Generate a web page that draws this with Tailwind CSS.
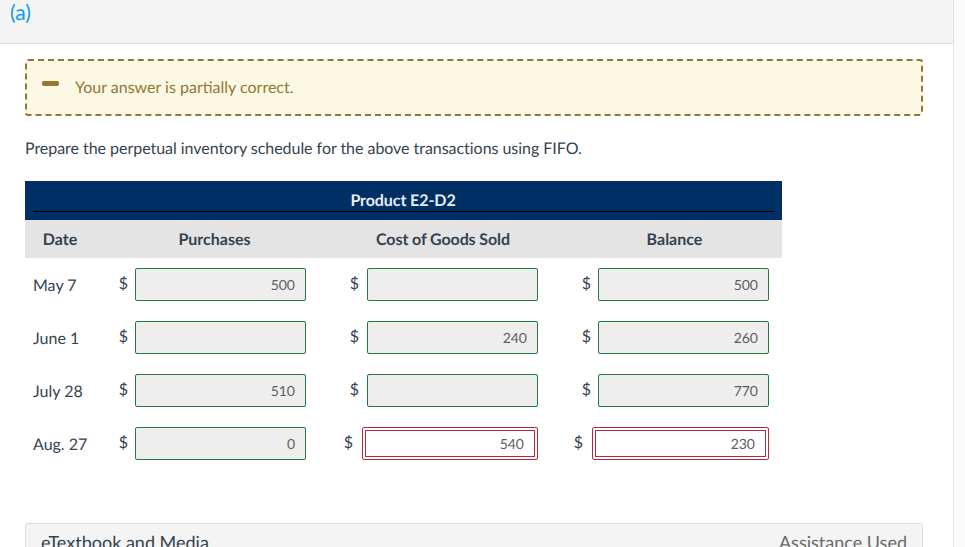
<!DOCTYPE html>
<html>
<head>
<meta charset="utf-8">
<script src="https://cdn.jsdelivr.net/npm/@tailwindcss/browser@4"></script>
</head>
<body class="h-[547px] w-[965px] overflow-hidden bg-[#fafafa] font-['Lato','Noto_Sans',sans-serif] text-[#35434f] [text-rendering:geometricPrecision]">
<div class="h-[547px] w-[954px] overflow-hidden border-r border-[#e3e3e3] bg-white">
  <div class="h-[44px] border-b border-[#dedede] bg-[#f4f4f4] pl-[10px] text-[21px] leading-[26px] text-[#0a9bf0]">(a)</div>
  <div class="mx-[25px] mt-[15px] flex h-[57px] w-[898px] items-center rounded-[3px] border-2 border-dashed border-[#957635] bg-[#fbf8e3] text-[16px] text-[#957635]">
    <div class="ml-[15px] mb-[9px] h-[5px] w-[17px] rounded-[2px] bg-[#957635]"></div>
    <div class="ml-[16px] mt-[1px]">Your answer is partially correct.</div>
  </div>
  <p class="ml-[25px] mt-[21px] text-[16px] leading-[24px] tracking-[-0.04px] text-[#35434f]">Prepare the perpetual inventory schedule for the above transactions using FIFO.</p>
  <div class="ml-[25px] mt-[20px] w-[757px]">
    <div class="h-[39px] bg-[#002f65] px-[8px] pt-[10px]">
      <div class="h-[21px] border-b border-black text-center text-[16px] font-bold leading-[19px] tracking-[-0.08px] text-[#e8edf3]"><span class="ml-[-1px]">Product E2-D2</span></div>
    </div>
    <div class="grid h-[38px] grid-cols-[70px_239px_218px_230px] items-center bg-[#e4e4e4] pt-[2px] text-center text-[16px] font-bold text-[#35434f]">
      <div>Date</div>
      <div>Purchases</div>
      <div class="tracking-[-0.1px]">Cost of Goods Sold</div>
      <div class="pl-[15px]">Balance</div>
    </div>

    <div class="mt-[10px] flex flex-col gap-[20px] pl-[8px] text-[16px]">
      <div class="grid h-[33px] grid-cols-[77px_196px_232px_231px] items-center">
        <div class="mt-[2px]">May 7</div>
        <div class="flex items-center justify-end gap-[7px]"><span class="mt-[-2px]">$</span><div class="flex h-[33px] w-[171px] items-center justify-end rounded-[2px] border border-[#1f7a3d] bg-[#eeeeee] pr-[10px] text-[14px] text-[#5e5e5e]">500</div></div>
        <div class="flex items-center justify-end gap-[8px]"><span class="mt-[-2px]">$</span><div class="flex h-[33px] w-[171px] items-center justify-end rounded-[2px] border border-[#1f7a3d] bg-[#eeeeee] pr-[10px] text-[14px] text-[#5e5e5e]"></div></div>
        <div class="flex items-center justify-end gap-[7px]"><span class="mt-[-2px]">$</span><div class="flex h-[33px] w-[171px] items-center justify-end rounded-[2px] border border-[#1f7a3d] bg-[#eeeeee] pr-[10px] text-[14px] text-[#5e5e5e]">500</div></div>
      </div>
      <div class="grid h-[33px] grid-cols-[77px_196px_232px_231px] items-center">
        <div class="mt-[2px]">June 1</div>
        <div class="flex items-center justify-end gap-[7px]"><span class="mt-[-2px]">$</span><div class="flex h-[33px] w-[171px] items-center justify-end rounded-[2px] border border-[#1f7a3d] bg-[#eeeeee] pr-[10px] text-[14px] text-[#5e5e5e]"></div></div>
        <div class="flex items-center justify-end gap-[8px]"><span class="mt-[-2px]">$</span><div class="flex h-[33px] w-[171px] items-center justify-end rounded-[2px] border border-[#1f7a3d] bg-[#eeeeee] pr-[10px] text-[14px] text-[#5e5e5e]">240</div></div>
        <div class="flex items-center justify-end gap-[7px]"><span class="mt-[-2px]">$</span><div class="flex h-[33px] w-[171px] items-center justify-end rounded-[2px] border border-[#1f7a3d] bg-[#eeeeee] pr-[10px] text-[14px] text-[#5e5e5e]">260</div></div>
      </div>
      <div class="grid h-[33px] grid-cols-[77px_196px_232px_231px] items-center">
        <div class="mt-[2px]">July 28</div>
        <div class="flex items-center justify-end gap-[7px]"><span class="mt-[-2px]">$</span><div class="flex h-[33px] w-[171px] items-center justify-end rounded-[2px] border border-[#1f7a3d] bg-[#eeeeee] pr-[10px] text-[14px] text-[#5e5e5e]">510</div></div>
        <div class="flex items-center justify-end gap-[8px]"><span class="mt-[-2px]">$</span><div class="flex h-[33px] w-[171px] items-center justify-end rounded-[2px] border border-[#1f7a3d] bg-[#eeeeee] pr-[10px] text-[14px] text-[#5e5e5e]"></div></div>
        <div class="flex items-center justify-end gap-[7px]"><span class="mt-[-2px]">$</span><div class="flex h-[33px] w-[171px] items-center justify-end rounded-[2px] border border-[#1f7a3d] bg-[#eeeeee] pr-[10px] text-[14px] text-[#5e5e5e]">770</div></div>
      </div>
      <div class="grid h-[33px] grid-cols-[77px_196px_232px_231px] items-center">
        <div class="mt-[2px]">Aug. 27</div>
        <div class="flex items-center justify-end gap-[7px]"><span class="mt-[-2px]">$</span><div class="flex h-[33px] w-[171px] items-center justify-end rounded-[2px] border border-[#1f7a3d] bg-[#eeeeee] pr-[10px] text-[14px] text-[#5e5e5e]">0</div></div>
        <div class="flex items-center justify-end gap-[9px]"><span class="mt-[-2px]">$</span><div class="flex h-[33px] w-[176px] items-center justify-end rounded-[2px] border border-[#b52a3a] bg-white p-[2px]"><div class="flex h-full w-full items-center justify-end border border-[#b52a3a] pr-[10px] text-[14px] text-[#5e5e5e]">540</div></div></div>
        <div class="flex items-center justify-end gap-[9px]"><span class="mt-[-2px]">$</span><div class="flex h-[33px] w-[177px] items-center justify-end rounded-[2px] border border-[#b52a3a] bg-white p-[2px]"><div class="flex h-full w-full items-center justify-end border border-[#b52a3a] pr-[10px] text-[14px] text-[#5e5e5e]">230</div></div></div>
      </div>
    </div>
  </div>
  <div class="ml-[25px] mt-[63px] flex h-[40px] w-[898px] justify-between rounded-t-[3px] border border-[#dcdcdc] bg-[#f4f4f4] px-[15px] pt-[6px] text-[18px] leading-[24px]">
    <span class="text-[#35434f]">eTextbook and Media</span>
    <span class="text-[#6b6b6b]">Assistance Used</span>
  </div>
</div>
</body>
</html>
